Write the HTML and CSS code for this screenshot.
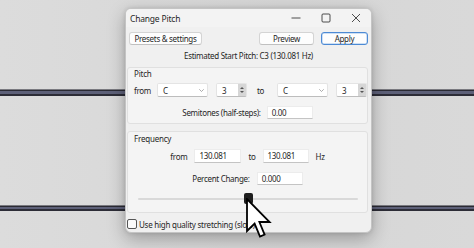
FILE: index.html
```html
<!DOCTYPE html>
<html lang="en">
<head>
    <meta charset="UTF-8">
    <title>Change Pitch</title>
    <link rel="stylesheet" href="styles.css">
</head>
<body>
    <div class="desktop">
        <div class="dialog">
            <div class="titlebar">
                <span class="title">Change Pitch</span>
                <div class="caption-buttons">
                    <span class="cap-btn"><svg width="10" height="10" viewBox="0 0 10 10"><path d="M0.5 5h9" stroke="#222" stroke-width="0.8"/></svg></span>
                    <span class="cap-btn"><svg width="10" height="10" viewBox="0 0 10 10"><rect x="1" y="1" width="8" height="8" rx="1" fill="none" stroke="#222" stroke-width="0.8"/></svg></span>
                    <span class="cap-btn"><svg width="10" height="10" viewBox="0 0 10 10"><path d="M1 1l8 8M9 1l-8 8" stroke="#222" stroke-width="0.8"/></svg></span>
                </div>
            </div>
            <div class="toolbar">
                <button class="btn presets">Presets &amp; settings</button>
                <div class="spacer"></div>
                <button class="btn preview">Preview</button>
                <button class="btn apply">Apply</button>
            </div>
            <div class="estimate">Estimated Start Pitch: C3 (130.081 Hz)</div>

            <div class="group pitch">
                <div class="group-label">Pitch</div>
                <div class="row pitch-row">
                    <span>from</span>
                    <div class="combo"><span>C</span><svg class="chev" width="5" height="3" viewBox="0 0 5 3"><path d="M0.3 0.3L2.5 2.5L4.7 0.3" fill="none" stroke="#8a8a8a" stroke-width="0.7"/></svg></div>
                    <div class="spin"><span>3</span><span class="spin-arrows"><i class="up"></i><i class="down"></i></span></div>
                    <span class="to">to</span>
                    <div class="combo"><span>C</span><svg class="chev" width="5" height="3" viewBox="0 0 5 3"><path d="M0.3 0.3L2.5 2.5L4.7 0.3" fill="none" stroke="#8a8a8a" stroke-width="0.7"/></svg></div>
                    <div class="spin"><span>3</span><span class="spin-arrows"><i class="up"></i><i class="down"></i></span></div>
                </div>
                <div class="row centered semis">
                    <span>Semitones (half-steps):</span>
                    <div class="field w46">0.00</div>
                </div>
            </div>

            <div class="group freq">
                <div class="group-label">Frequency</div>
                <div class="row centered freq-row">
                    <span>from</span>
                    <div class="field w47">130.081</div>
                    <span>to</span>
                    <div class="field w46">130.081</div>
                    <span>Hz</span>
                </div>
                <div class="row centered percent">
                    <span>Percent Change:</span>
                    <div class="field w46">0.000</div>
                </div>
                <div class="slider">
                    <div class="track"></div>
                    <div class="thumb"></div>
                </div>
            </div>

            <label class="check-row">
                <span class="checkbox"></span>
                <span>Use high quality stretching (slow)</span>
            </label>
        </div>

        <svg class="cursor" width="26" height="42" viewBox="0 0 13 21">
            <path d="M0.5 0.5 L0.5 16.5 L4.3 12.8 L7 19.3 L9.3 18.3 L6.7 12 L11.8 12 Z" fill="#fff" stroke="#000" stroke-width="0.9" stroke-linejoin="miter"/>
        </svg>
    </div>
</body>
</html>
```

FILE: styles.css
```css
/* Basic styling */
html, body {
    margin: 0;
    padding: 0;
}
body {
    font-family: "Noto Sans", "Open Sans", sans-serif;
    font-size: 8px;
    color: #262626;
}
.desktop {
    position: relative;
    width: 474px;
    height: 248px;
    overflow: hidden;
    background:
        linear-gradient(to bottom,
            transparent 89px, #c9c9cc 89px, #2a2a33 90px, #2a2a33 91px,
            #5d6078 91px, #5d6078 94px, #2c2c36 94px, #2c2c36 96px, transparent 96px,
            transparent 205px, #c9c9cc 205px, #2a2a33 206px, #2a2a33 207px,
            #5d6078 207px, #5d6078 209px, #2c2c36 209px, #2c2c36 211px, transparent 211px),
        linear-gradient(to right, #dcdcdc, #d6d6d6 60%, #d9d9d9);
}
.dialog {
    position: absolute;
    left: 125px;
    top: 8px;
    width: 247px;
    height: 225px;
    box-sizing: border-box;
    background: #f0f0f0;
    border: 1px solid #c4c4c4;
    border-radius: 6px;
    box-shadow: 0 6px 18px rgba(0, 0, 0, 0.28), 0 0 4px rgba(0, 0, 0, 0.12);
    display: flex;
    flex-direction: column;
    overflow: hidden;
}
.titlebar {
    height: 18px;
    display: flex;
    align-items: center;
    background: #f3f3f3;
}
.title {
    flex: 1;
    padding-left: 4px;
    font-size: 8.5px;
    letter-spacing: -0.2px;
}
.caption-buttons {
    display: flex;
    height: 100%;
}
.cap-btn {
    width: 30px;
    display: flex;
    align-items: center;
    justify-content: center;
}
.toolbar {
    display: flex;
    align-items: center;
    padding: 5px 3px 0 3px;
    gap: 7px;
}
.spacer {
    flex: 1;
}
.btn {
    height: 13px;
    padding: 0;
    font-family: inherit;
    font-size: 8px;
    letter-spacing: -0.3px;
    color: #262626;
    background: #fdfdfd;
    border: 1px solid #d4d4d4;
    border-bottom-color: #c0c0c0;
    border-radius: 3px;
}
.presets {
    width: 73px;
}
.preview {
    width: 55px;
}
.apply {
    width: 47px;
    border: 1px solid #4d8ad4;
    box-shadow: inset 0 0 0 0.5px #9cc1ec;
}
.estimate {
    margin-top: 5px;
    height: 12px;
    line-height: 12px;
    text-align: center;
    letter-spacing: -0.3px;
}
.group {
    margin: 5px 3px 0 1px;
    background: #f4f4f4;
    border: 1px solid #e0e0e0;
    border-radius: 3px;
    padding: 0 0 4px 0;
}
.group-label {
    height: 12px;
    line-height: 12px;
    padding-left: 6px;
    letter-spacing: -0.2px;
}
.row {
    display: flex;
    align-items: center;
    letter-spacing: -0.3px;
}
.centered {
    justify-content: center;
}
.pitch-row {
    margin-top: 3px;
    padding-left: 6px;
    height: 14px;
}
.pitch-row .combo {
    margin-left: 6px;
}
.pitch-row .spin {
    margin-left: 8px;
}
.pitch-row .to {
    margin-left: 10px;
    margin-right: 7px;
}
.combo {
    width: 51px;
    height: 14px;
    box-sizing: border-box;
    background: #fff;
    border: 1px solid #e4e4e4;
    border-bottom-color: #bdbdbd;
    border-radius: 2px;
    display: flex;
    align-items: center;
    justify-content: space-between;
    padding: 0 3px 0 5px;
}
.chev {
    display: block;
}
.spin {
    width: 31px;
    height: 14px;
    box-sizing: border-box;
    background: #fff;
    border: 1px solid #e4e4e4;
    border-bottom-color: #bdbdbd;
    border-radius: 2px;
    display: flex;
    align-items: center;
    justify-content: space-between;
    padding-left: 5px;
}
.spin-arrows {
    width: 8px;
    height: 12px;
    background: #d6d6d6;
    display: flex;
    flex-direction: column;
    align-items: center;
    justify-content: space-evenly;
}
.spin-arrows i {
    width: 0;
    height: 0;
    border-left: 2px solid transparent;
    border-right: 2px solid transparent;
}
.spin-arrows .up {
    border-bottom: 2.5px solid #555;
}
.spin-arrows .down {
    border-top: 2.5px solid #555;
}
.semis {
    margin-top: 9px;
    gap: 6px;
}
.field {
    height: 13px;
    line-height: 12px;
    box-sizing: border-box;
    background: #fff;
    border: 1px solid #ececec;
    border-bottom-color: #c4c4c4;
    padding-left: 4px;
}
.w46 {
    width: 46px;
}
.w47 {
    width: 47px;
}
.freq {
    margin-top: 7px;
    padding-bottom: 8px;
}
.freq .group-label {
    margin-top: 1px;
}
.freq-row {
    margin-top: 4px;
    height: 14px;
    gap: 7px;
}
.freq-row .field {
    height: 14px;
}
.percent {
    margin-top: 9px;
    gap: 7px;
}
.slider {
    position: relative;
    margin: 8px 9px 0 10px;
    height: 11px;
    display: flex;
    align-items: center;
}
.track {
    flex: 1;
    height: 2px;
    background: #d9d9d9;
    border-radius: 1px;
}
.thumb {
    position: absolute;
    left: 106px;
    top: 0;
    width: 9px;
    height: 11px;
    background: #1e1e1e;
    border-radius: 2px;
}
.check-row {
    display: flex;
    align-items: center;
    gap: 2px;
    margin: auto 0 2px 1px;
    letter-spacing: -0.25px;
    height: 12px;
}
.checkbox {
    width: 8px;
    height: 8px;
    border: 1px solid #555;
    border-radius: 2px;
    background: #fafafa;
}
.cursor {
    position: absolute;
    left: 246px;
    top: 198px;
}
```
